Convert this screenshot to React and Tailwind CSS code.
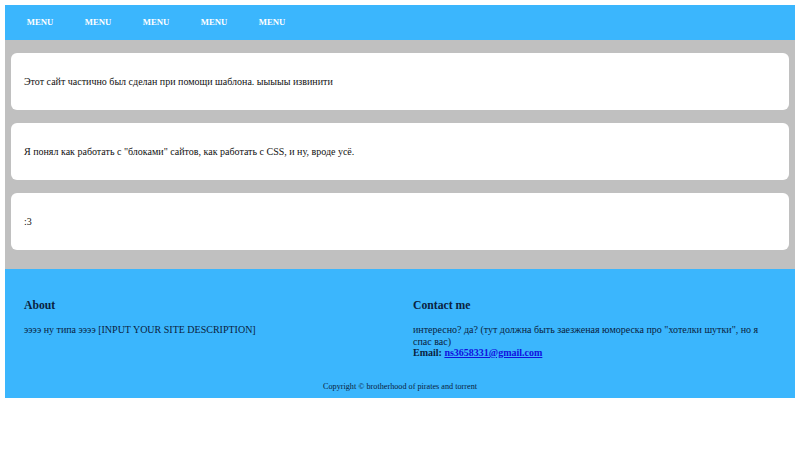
export default function App() {
  const menu = ["MENU", "MENU", "MENU", "MENU", "MENU"];
  const blocks = [
    "Этот сайт частично был сделан при помощи шаблона. ыыыыы извинити",
    'Я понял как работать с "блоками" сайтов, как работать с CSS, и ну, вроде усё.',
    ":3",
  ];

  return (
    <div className="min-h-[450px] bg-white p-[5px] font-['Liberation_Serif',serif]">
      <header className="flex h-[35px] items-center bg-[#3bb6fd] pl-[6px]">
        {menu.map((item, i) => (
          <a
            key={i}
            href="#"
            className="w-[58px] text-center text-[8.7px] font-bold text-white"
          >
            {item}
          </a>
        ))}
      </header>

      <main className="flex flex-col gap-[13px] bg-[#c0c0c0] px-[6px] pt-[13px] pb-[19px]">
        {blocks.map((text, i) => (
          <div
            key={i}
            className="flex h-[57px] items-center rounded-[6px] bg-white px-[13px] text-[10px] text-[#111]"
          >
            {text}
          </div>
        ))}
      </main>

      <footer className="bg-[#3bb6fd] pt-[30px] pb-[6px] text-[#0a2240]">
        <div className="grid grid-cols-[408px_1fr] pr-[19px]">
          <div className="pl-[19px]">
            <h3 className="text-[11.7px] font-bold leading-[14px]">About</h3>
            <p className="mt-[11px] text-[10px] leading-[11.5px]">
              ээээ ну типа ээээ [INPUT YOUR SITE DESCRIPTION]
            </p>
          </div>
          <div>
            <h3 className="text-[11.7px] font-bold leading-[14px]">Contact me</h3>
            <p className="mt-[11px] text-[10px] leading-[11.5px]">
              интересно? да? (тут должна быть заезженая юмореска про "хотелки
              шутки", но я спас вас)
              <br />
              <b>Email: </b>
              <a href="#" className="font-bold text-[#1010e0] underline">
                ns3658331@gmail.com
              </a>
            </p>
          </div>
        </div>
        <p className="mt-[23px] text-center text-[8.2px] leading-[10px]">
          Copyright © brotherhood of pirates and torrent
        </p>
      </footer>
    </div>
  );
}
